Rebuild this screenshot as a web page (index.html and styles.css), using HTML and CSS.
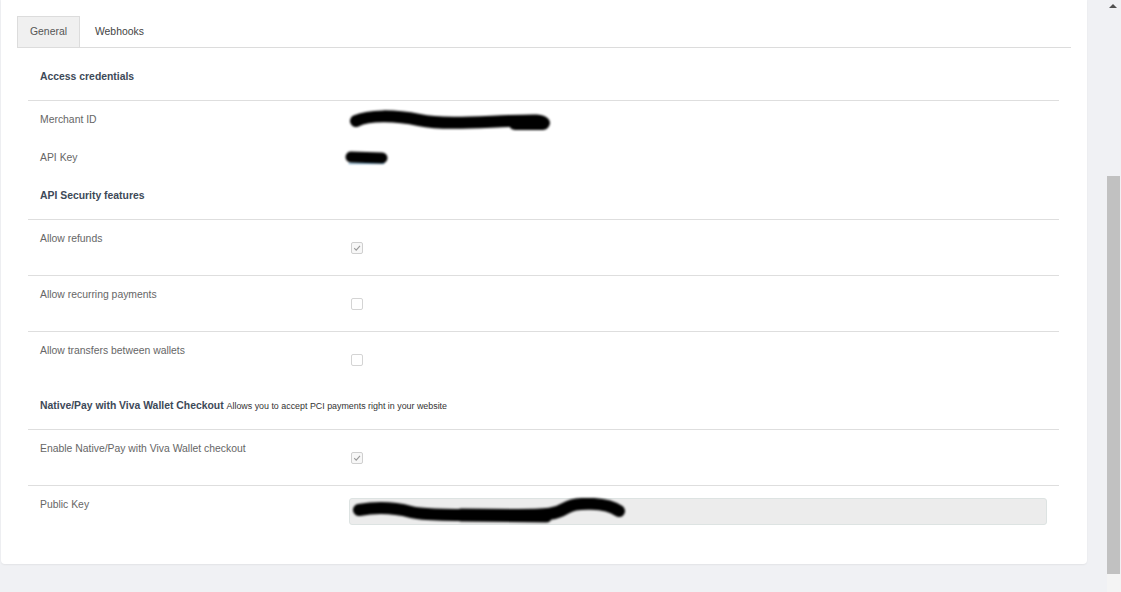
FILE: index.html
```html
<!DOCTYPE html>
<html lang="en">
<head>
<meta charset="utf-8">
<title>Settings</title>
<link rel="stylesheet" href="styles.css">
</head>
<body>
<div class="page">
  <div class="card">
    <ul class="tabs">
      <li class="tab active">General</li>
      <li class="tab">Webhooks</li>
    </ul>
    <div class="content">
      <div class="section-title first">Access credentials</div>
      <div class="kv-row">
        <div class="label">Merchant ID</div>
        <div class="value">
          <svg class="redact merchant" width="210" height="26" viewBox="0 0 210 26">
            <path d="M7 13 C 20 7, 45 7, 70 12 S 130 14, 160 13 S 192 12, 195 15" fill="none" stroke="#000" stroke-width="12" stroke-linecap="round"/>
            <path d="M166 16 L 194 16" fill="none" stroke="#000" stroke-width="12" stroke-linecap="round"/>
          </svg>
        </div>
      </div>
      <div class="kv-row">
        <div class="label">API Key</div>
        <div class="value">
          <svg class="redact apikey" width="50" height="20" viewBox="0 0 50 20">
            <line x1="6" y1="15.5" x2="41" y2="15.5" stroke="#1a6fa8" stroke-width="1" stroke-dasharray="2 1"/>
            <path d="M8 9 L 39 10" fill="none" stroke="#000" stroke-width="11" stroke-linecap="round"/>
          </svg>
        </div>
      </div>
      <div class="section-title">API Security features</div>
      <div class="cb-row">
        <div class="label">Allow refunds</div>
        <div class="value"><span class="checkbox checked"><svg width="10" height="10" viewBox="0 0 10 10"><path d="M2.2 5.2 L4.2 7.2 L8 2.8" fill="none" stroke="#9a9a9a" stroke-width="1.1"/></svg></span></div>
      </div>
      <div class="cb-row">
        <div class="label">Allow recurring payments</div>
        <div class="value"><span class="checkbox"></span></div>
      </div>
      <div class="cb-row">
        <div class="label">Allow transfers between wallets</div>
        <div class="value"><span class="checkbox"></span></div>
      </div>
      <div class="section-title">Native/Pay with Viva Wallet Checkout <span class="hint">Allows you to accept PCI payments right in your website</span></div>
      <div class="cb-row">
        <div class="label">Enable Native/Pay with Viva Wallet checkout</div>
        <div class="value"><span class="checkbox checked"><svg width="10" height="10" viewBox="0 0 10 10"><path d="M2.2 5.2 L4.2 7.2 L8 2.8" fill="none" stroke="#9a9a9a" stroke-width="1.1"/></svg></span></div>
      </div>
      <div class="cb-row">
        <div class="label">Public Key</div>
        <div class="value">
          <div class="input-box">
            <svg class="redact pubkey" width="280" height="27" viewBox="0 0 280 27">
              <path d="M8 12 C 25 9, 45 10, 60 14 S 120 17, 160 17 S 205 16, 215 10 S 255 4, 268 13" fill="none" stroke="#000" stroke-width="12" stroke-linecap="round"/>
              <path d="M110 17 L 195 18" fill="none" stroke="#000" stroke-width="13" stroke-linecap="round"/>
            </svg>
          </div>
        </div>
      </div>
    </div>
  </div>
</div>
<div class="scrollbar">
  <div class="sb-btn"><span class="arrow-up"></span></div>
  <div class="sb-track"><div class="sb-thumb"></div></div>
  <div class="sb-btn bottom"></div>
</div>
</body>
</html>
```
FILE: styles.css
```css
* { box-sizing: border-box; }
html, body { margin: 0; padding: 0; }
body {
  width: 1121px;
  height: 592px;
  overflow: hidden;
  display: flex;
  background: #f0f1f4;
  font-family: "Liberation Sans", Arial, sans-serif;
  font-size: 10.4px;
  color: #666;
}
.page {
  width: 1104px;
  padding-left: 1px;
}
.card {
  width: 1086px;
  height: 564px;
  background: #fff;
  border-radius: 0 0 4px 4px;
  box-shadow: 0 1px 2px rgba(0,0,0,0.06);
  padding: 16px 16px 0 16px;
}
.tabs {
  list-style: none;
  margin: 0;
  padding: 0;
  display: flex;
  border-bottom: 1px solid #dcdcdc;
}
.tab {
  height: 31px;
  padding: 8px 12px 0 12px;
  line-height: 14px;
  margin-right: 2px;
  border: 1px solid transparent;
  border-bottom: none;
  color: #444;
}
.tab.active {
  background: #f0f0f0;
  border-color: #dcdcdc;
  color: #555;
}
.content {
  margin: 0 12px 0 11px;
}
.section-title {
  height: 43px;
  padding: 12px 12px 0 12px;
  line-height: 14px;
  font-weight: bold;
  color: #3d4958;
  border-bottom: 1px solid #dedede;
}
.section-title.first {
  height: 53px;
  padding-top: 22px;
}
.hint {
  font-weight: normal;
  color: #333;
  font-size: 8.9px;
}
.kv-row {
  display: grid;
  grid-template-columns: 309px 1fr;
  height: 38px;
}
.cb-row {
  display: grid;
  grid-template-columns: 309px 1fr;
  min-height: 55px;
}
.cb-row + .cb-row {
  min-height: 56px;
  border-top: 1px solid #dedede;
}
.label {
  padding: 12px 12px 0 12px;
  line-height: 14px;
  color: #666;
}
.value {
  padding: 0 12px;
}
.checkbox {
  display: flex;
  align-items: center;
  justify-content: center;
  width: 12px;
  height: 12px;
  margin: 22px 0 0 2px;
  border: 1px solid #d4d4d4;
  border-radius: 2px;
  background: #fff;
}
.checkbox.checked {
  background: #f7f7f7;
  border-color: #cfcfcf;
}
.redact {
  display: block;
  filter: blur(0.9px);
}
.redact.merchant { margin-top: 7px; }
.redact.apikey { margin: 9px 0 0 -6px; }
.input-box {
  margin-top: 12px;
  height: 27px;
  background: #ececec;
  border: 1px solid #dde3e2;
  border-radius: 3px;
  padding-left: 1px;
}
.redact.pubkey { margin-top: -1px; }
.scrollbar {
  width: 17px;
  height: 592px;
  display: flex;
  flex-direction: column;
  background: #f0f1f4;
}
.sb-btn {
  height: 17px;
  display: flex;
  justify-content: center;
  padding-top: 4px;
}
.sb-btn.bottom {
  height: 18px;
  margin-left: 3px;
  background: #f4f4f4;
}
.arrow-up {
  width: 0;
  height: 0;
  border-left: 4px solid transparent;
  border-right: 4px solid transparent;
  border-bottom: 4px solid #505050;
  margin-left: 1px;
}
.sb-track {
  flex: 1;
  display: flex;
  flex-direction: column;
  justify-content: flex-end;
}
.sb-thumb {
  height: 398px;
  width: 13px;
  margin-left: 3px;
  background: #c1c1c1;
}
```
